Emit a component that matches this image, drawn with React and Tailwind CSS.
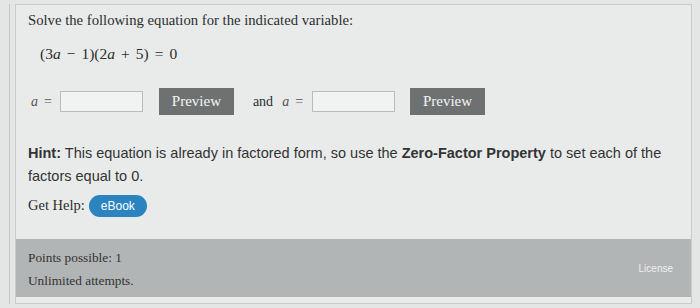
import React from 'react';

const serif = { fontFamily: '"Liberation Serif", "Times New Roman", serif' };
const sans = { fontFamily: '"Liberation Sans", Arial, sans-serif' };

const MathA = () => <i style={serif}>a</i>;

const Op = ({ children }) => <span className="mx-[6px]">{children}</span>;

const AnswerBox = ({ className }) => (
  <div className={`h-[21px] w-[83px] border border-[#b9bcbc] bg-[#f1f2f2] ${className || ''}`} />
);

const PreviewButton = () => (
  <button className="h-[27px] w-[75px] bg-[#6e7171] text-[15px] text-[#f4f4f4]" style={serif}>
    Preview
  </button>
);

export default function App() {
  return (
    <div className="h-[308px] w-[700px] overflow-hidden bg-[#e4e6e6] pl-[9px] pr-[8px] pt-[4px] text-[#2b2e2e]">
      <div className="flex h-[300px] flex-col border-l border-[#c4c7c7] pl-[5px]">
        <div className="flex flex-1 flex-col border border-[#c9cccc] bg-[#e9ebeb]">
          <div className="px-[12px] pt-[5px]">
            <p className="text-[14.7px] leading-[20px]" style={serif}>
              Solve the following equation for the indicated variable:
            </p>
            <p className="mt-[14px] pl-[12px] text-[15.5px] leading-[20px]" style={serif}>
              (3<MathA /><Op>−</Op>1)(2<MathA /><Op>+</Op>5)<Op>=</Op>0
            </p>
            <div className="mt-[24px] flex items-center text-[14px]" style={serif}>
              <span className="ml-[3px] text-[#555]"><MathA /><span className="ml-[6px]">=</span></span>
              <AnswerBox className="ml-[8px]" />
              <div className="ml-[16px]"><PreviewButton /></div>
              <span className="ml-[19px]">and</span>
              <span className="ml-[9px] text-[#555]"><MathA /><span className="ml-[6px]">=</span></span>
              <AnswerBox className="ml-[9px]" />
              <div className="ml-[15px]"><PreviewButton /></div>
            </div>
            <p className="mt-[27px] pr-[8px] text-[14.5px] leading-[23px] text-[#333]" style={sans}>
              <b>Hint:</b> This equation is already in factored form, so use the <b>Zero-Factor Property</b> to set each of the factors equal to 0.
            </p>
            <div className="mt-[7px] flex items-center">
              <span className="text-[14.5px]" style={serif}>Get Help:</span>
              <span
                className="ml-[4px] flex h-[22px] items-center rounded-full bg-[#2b84c0] px-[12px] text-[12px] text-white"
                style={sans}
              >
                eBook
              </span>
            </div>
          </div>
          <div className="mt-auto flex h-[58px] items-center justify-between bg-[#b2b5b5] px-[12px]">
            <div className="pt-[2px] text-[13.3px] leading-[23px] text-[#333]" style={serif}>
              <div>Points possible: 1</div>
              <div>Unlimited attempts.</div>
            </div>
            <span className="mr-[6px] text-[10px] text-[#eef0f0]" style={sans}>
              License
            </span>
          </div>
          <div className="h-[6px]" />
        </div>
      </div>
    </div>
  );
}
